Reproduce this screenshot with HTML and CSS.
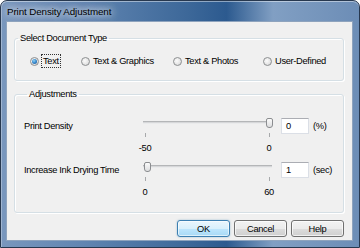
FILE: index.html
```html
<!DOCTYPE html>
<html lang="en">
<head>
    <meta charset="UTF-8">
    <title>Print Density Adjustment</title>
    <link rel="stylesheet" href="styles.css">
</head>
<body>
    <div class="window">
        <div class="titlebar">
            <span class="title">Print Density Adjustment</span>
        </div>
        <div class="client">
            <fieldset class="group doc-type">
                <legend>Select Document Type</legend>
                <div class="radios">
                    <label class="radio checked"><span class="circle"></span><span class="focus">Text</span></label>
                    <label class="radio"><span class="circle"></span><span>Text &amp; Graphics</span></label>
                    <label class="radio"><span class="circle"></span><span>Text &amp; Photos</span></label>
                    <label class="radio"><span class="circle"></span><span>User-Defined</span></label>
                </div>
            </fieldset>

            <fieldset class="group adjust">
                <legend>Adjustments</legend>
                <div class="adj-row">
                    <span class="adj-label">Print Density</span>
                    <div class="slider">
                        <div class="track"><div class="rail"><span class="thumb" style="left: 100%"></span></div></div>
                        <div class="ticks"><i></i><i></i></div>
                        <div class="scale"><span>-50</span><span>0</span></div>
                    </div>
                    <div class="field">0</div>
                    <span class="unit">(%)</span>
                </div>
                <div class="adj-row">
                    <span class="adj-label">Increase Ink Drying Time</span>
                    <div class="slider">
                        <div class="track"><div class="rail"><span class="thumb" style="left: 1.67%"></span></div></div>
                        <div class="ticks"><i></i><i></i></div>
                        <div class="scale"><span>0</span><span>60</span></div>
                    </div>
                    <div class="field">1</div>
                    <span class="unit">(sec)</span>
                </div>
            </fieldset>

            <div class="buttons">
                <button class="btn default">OK</button>
                <button class="btn">Cancel</button>
                <button class="btn">Help</button>
            </div>
        </div>
    </div>
</body>
</html>
```

FILE: styles.css
```css
* {
    box-sizing: border-box;
}

body {
    margin: 0;
    width: 360px;
    height: 248px;
    overflow: hidden;
    background: #fff;
}

/* Aero window frame */
.window {
    width: 360px;
    height: 248px;
    display: flex;
    flex-direction: column;
    border: 1px solid #27384f;
    border-radius: 7px 7px 0 0;
    background: linear-gradient(to right, #7997bd 0%, #6286b2 22%, #3d6899 52%, #2c5a8f 63%, #819fc3 76%, #6c8db6 100%);
    box-shadow: inset 0 1px 0 rgba(255, 255, 255, 0.45), inset 1px 0 0 rgba(255, 255, 255, 0.3);
}

.titlebar {
    height: 20px;
    flex-shrink: 0;
    display: flex;
    align-items: center;
    padding: 1px 0 0 6px;
}

.title {
    font-family: 'Liberation Sans', Arial, sans-serif;
    font-size: 9.8px;
    letter-spacing: -0.1px;
    color: #000;
    text-shadow: 0 0 6px rgba(255, 255, 255, 0.9), 0 0 10px rgba(255, 255, 255, 0.8), 0 0 14px rgba(255, 255, 255, 0.6);
}

/* Dialog body */
.client {
    height: 220px;
    margin: 0 6px 0 5px;
    padding: 10px 8px 0 7px;
    background: #f0f0f0;
    border: 1px solid #8ea3bd;
    font-family: 'Liberation Sans', Arial, sans-serif;
    font-size: 9.3px;
    letter-spacing: -0.32px;
    color: #000;
}

.group {
    margin: 0;
    padding: 0;
    min-width: 0;
    border: 1px solid #d5dfe5;
    border-radius: 3px;
    box-shadow: inset 1px 1px 0 #fff, 1px 1px 0 #fff;
}

.group legend {
    margin-left: 3px;
    padding: 0 2px;
    line-height: 12px;
}

/* Document type radios */
.doc-type .radios {
    display: grid;
    grid-template-columns: 51px 92px 90px auto;
    align-items: center;
    height: 14px;
    margin: 10px 0 12px 15px;
}

.radio {
    display: flex;
    align-items: center;
    gap: 3px;
}

.circle {
    width: 9px;
    height: 9px;
    border-radius: 50%;
    border: 1px solid #8d8f91;
    background: radial-gradient(circle at 40% 40%, #fbfbfb 0%, #e6e6e6 55%, #cfd0d1 100%);
    display: flex;
    align-items: center;
    justify-content: center;
}

.radio.checked .circle::after {
    content: '';
    width: 5px;
    height: 5px;
    border-radius: 50%;
    background: radial-gradient(circle at 40% 35%, #8fd3f6 0%, #3c8dd0 45%, #1b4f8c 100%);
}

.focus {
    outline: 1px dotted #333;
    outline-offset: 0;
    padding: 0 1px;
    line-height: 12px;
}

/* Adjustments */
.adjust {
    margin-top: 7px;
    padding: 18px 0 14px 9px;
}

.adj-row {
    display: grid;
    grid-template-columns: 116px 141px 28px auto;
    height: 44px;
    align-items: start;
}

.adj-row:last-child {
    height: 36px;
}

.adj-label {
    line-height: 16px;
}

.slider {
    width: 134px;
    padding-top: 3px;
}

.track {
    margin: 0 2px 0 3px;
    height: 3px;
    border-top: 1px solid #b4b6b8;
    border-bottom: 1px solid #eaebec;
    background: #d6d7d9;
}

.rail {
    position: relative;
    margin: 0 3px 0 2px;
    height: 1px;
}

.thumb {
    position: absolute;
    top: -4px;
    width: 7px;
    height: 10px;
    margin-left: -3px;
    border: 1px solid #8b8d90;
    border-radius: 2px 2px 3px 3px;
    background: linear-gradient(#fbfbfb, #dcdddf);
}

.ticks {
    display: flex;
    justify-content: space-between;
    margin: 9px 4px 0 5px;
    height: 4px;
}

.ticks i {
    width: 1px;
    background: #a7a9ab;
}

.scale {
    display: flex;
    justify-content: space-between;
    margin: 5px -5px 0 -5px;
    line-height: 12px;
}

.scale span {
    width: 20px;
    text-align: center;
}

.field {
    height: 16px;
    width: 28px;
    padding-left: 4px;
    line-height: 14px;
    background: #fff;
    border: 1px solid #dbdfe6;
    border-top-color: #abadb3;
}

.unit {
    padding-left: 4px;
    line-height: 16px;
}

/* Buttons */
.buttons {
    display: flex;
    justify-content: flex-end;
    gap: 4px;
    margin-top: 7px;
}

.btn {
    width: 53px;
    height: 17px;
    padding: 0;
    font: inherit;
    letter-spacing: inherit;
    color: #000;
    border: 1px solid #707070;
    border-radius: 3px;
    background: linear-gradient(#f2f2f2 0%, #ebebeb 50%, #dddddd 51%, #cfcfcf 100%);
    box-shadow: inset 0 0 0 1px rgba(255, 255, 255, 0.7);
}

.btn.default {
    border-color: #3c7fb1;
    background: linear-gradient(#eaf6fd 0%, #d9f0fc 50%, #bee6fd 51%, #a7d9f5 100%);
    box-shadow: inset 0 0 0 1px rgba(255, 255, 255, 0.6), 0 0 2px rgba(60, 127, 177, 0.5);
}
```
